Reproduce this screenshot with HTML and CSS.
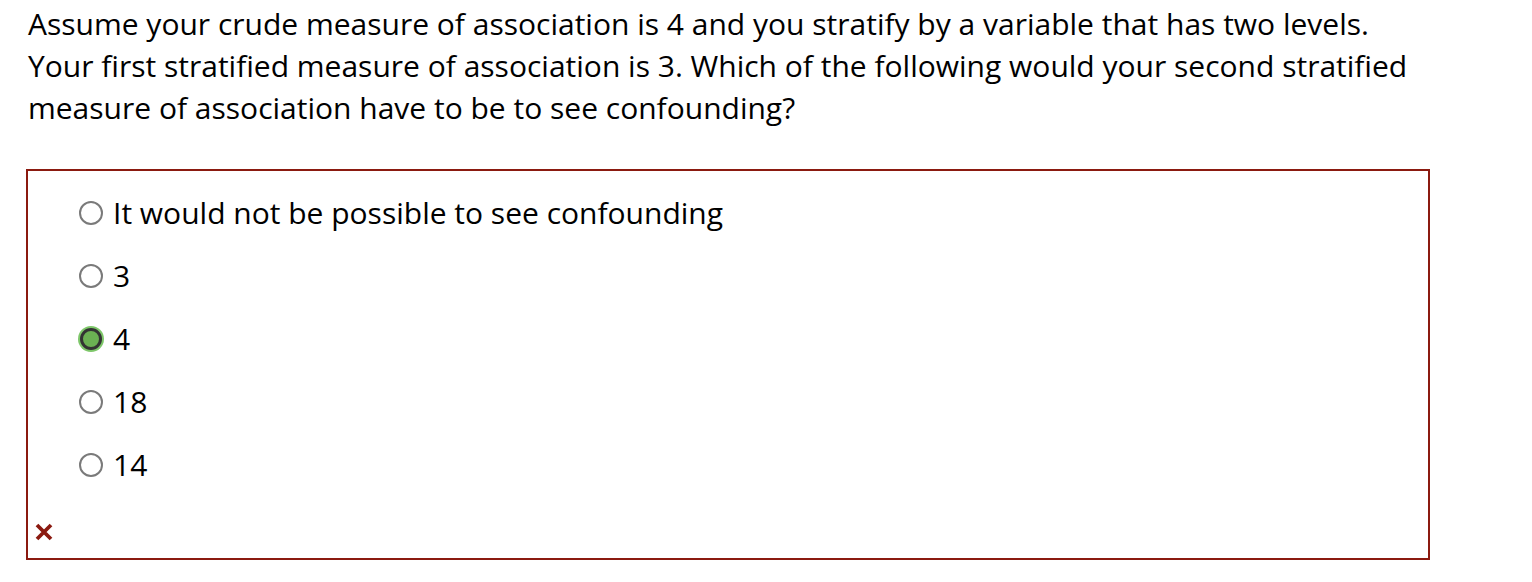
FILE: index.html
```html
<!DOCTYPE html>
<html lang="en">
<head>
  <meta charset="UTF-8">
  <title>Quiz question</title>
  <link rel="stylesheet" href="styles.css">
</head>
<body>
  <div class="question">
    <p class="question-text">Assume your crude measure of association is 4 and you stratify by a variable that has two levels. Your first stratified measure of association is 3. Which of the following would your second stratified measure of association have to be to see confounding?</p>

    <div class="answers">
      <label class="answer"><span class="radio"></span>It would not be possible to see confounding</label>
      <label class="answer"><span class="radio"></span>3</label>
      <label class="answer"><span class="radio checked"></span>4</label>
      <label class="answer"><span class="radio"></span>18</label>
      <label class="answer"><span class="radio"></span>14</label>
      <div class="wrong">
        <svg width="18" height="18" viewBox="0 0 18 18"><path d="M2 2 L16 16 M16 2 L2 16" stroke="#8b1a10" stroke-width="3.8"/></svg>
      </div>
    </div>
  </div>
</body>
</html>
```

FILE: styles.css
```css
body {
  font-family: "Open Sans", sans-serif;
  color: #000;
  background-color: #fff;
  margin: 0;
  padding: 0;
}

.question {
  padding: 3px 0 0 28px;
}

.question-text {
  font-size: 30px;
  line-height: 42px;
  margin: 0 0 40px 0;
  width: 1395px;
}

.answers {
  border: 2px solid #8b1a10;
  width: 1400px;
  margin-left: -2px;
  padding: 10px 0 17px 0;
}

.answer {
  display: flex;
  align-items: center;
  height: 63px;
  padding-left: 51px;
  font-size: 30px;
}

.radio {
  width: 20px;
  height: 20px;
  border: 2px solid #7a7a7a;
  border-radius: 50%;
  margin-right: 10px;
  flex: none;
}

.radio.checked {
  width: 16px;
  height: 16px;
  margin-left: 1px;
  margin-right: 11px;
  background-color: #6bb053;
  border: 3px solid #333;
  box-shadow: 0 0 0 2px #7ec76a;
}

.wrong {
  padding: 27px 0 0 7px;
}

.wrong svg {
  display: block;
}
```
